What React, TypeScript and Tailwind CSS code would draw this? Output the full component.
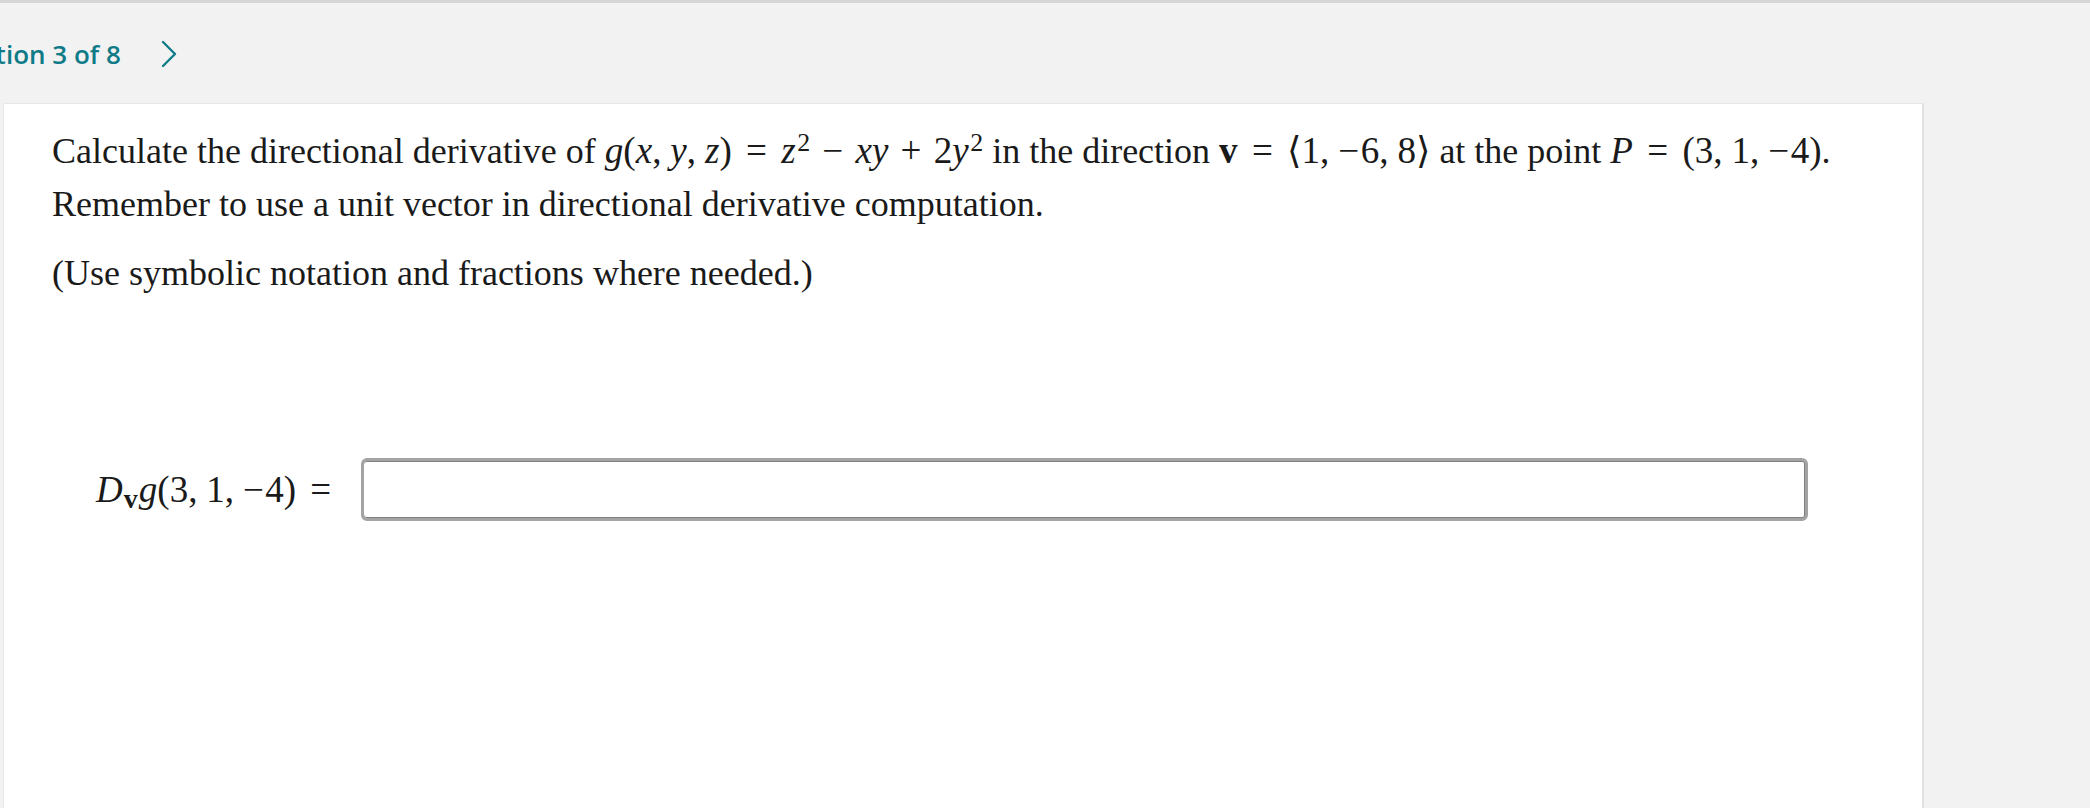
import type { ReactNode } from 'react';

// inline math helpers, MathJax-like spacing
const I = ({ children }: { children: ReactNode }) => <span className="italic">{children}</span>;

const Sup = ({ children }: { children: ReactNode }) => (
  <span className="relative -top-[0.48em] ml-[0.06em] text-[0.7em] leading-none">{children}</span>
);

const Rel = ({ children }: { children: ReactNode }) => (
  <span className="mx-[0.278em] inline-block w-[0.778em] text-center">{children}</span>
);

const Bin = ({ children }: { children: ReactNode }) => (
  <span className="mx-[0.222em] inline-block w-[0.778em] text-center">{children}</span>
);

const Neg = () => <span className="mr-[0.04em]">−</span>;

const C = () => <span className="mr-[0.24em]">,</span>;

function Header() {
  return (
    <div className="flex h-[100px] items-center overflow-hidden pt-[2px]">
      <span className="-ml-[69px] whitespace-nowrap font-['Open_Sans',sans-serif] text-[26px] font-semibold text-[#0f7b88]">
        Question 3 of 8
      </span>
      <svg width="16" height="28" viewBox="0 0 16 28" className="ml-[40px] text-[#0f7b88]" fill="none">
        <polyline points="2,2 14,14 2,26" stroke="currentColor" strokeWidth="2.4" strokeLinecap="round" strokeLinejoin="round" />
      </svg>
    </div>
  );
}

function Question() {
  return (
    <div className="font-['Liberation_Serif','DejaVu_Serif',serif] text-[36px] text-[#1a1a1a]">
      <p className="leading-[53px] whitespace-nowrap">
        Calculate the directional derivative of{' '}
        <span className="text-[1.03em]">
          <I>g</I>(<I>x</I>
          <C />
          <I>y</I>
          <C />
          <I>z</I>)<Rel>=</Rel>
          <I>z</I>
          <Sup>2</Sup>
          <Bin>−</Bin>
          <I>xy</I>
          <Bin>+</Bin>2<I>y</I>
          <Sup>2</Sup>
        </span>{' '}
        in the direction{' '}
        <span className="text-[1.03em]">
          <b>v</b>
          <Rel>=</Rel>⟨1
          <C />
          <Neg />6
          <C />
          8⟩
        </span>{' '}
        at the point{' '}
        <span className="text-[1.03em]">
          <I>P</I>
          <Rel>=</Rel>(3
          <C />1
          <C />
          <Neg />4)
        </span>
        .
      </p>
      <p className="leading-[53px]">Remember to use a unit vector in directional derivative computation.</p>
      <p className="mt-[16px] leading-[53px]">(Use symbolic notation and fractions where needed.)</p>
    </div>
  );
}

function AnswerRow() {
  return (
    <div className="mt-[158px] ml-[44px] flex items-center">
      <div className="w-[265px] whitespace-nowrap font-['Liberation_Serif','DejaVu_Serif',serif] text-[37px] leading-[63px] text-[#1a1a1a]">
        <I>D</I>
        <b className="relative top-[0.22em] ml-[0.04em] mr-[0.04em] text-[0.75em] leading-none">v</b>
        <I>g</I>(3
        <C />1
        <C />
        <Neg />4)<Rel>=</Rel>
      </div>
      <input
        type="text"
        aria-label="answer"
        className="h-[63px] w-[1447px] rounded-[6px] border-[3px] border-[#a3a3a3] bg-white px-3 text-[30px] shadow-[inset_0_1px_0_#7f7f7f,inset_0_-1px_0_#7f7f7f,inset_-1px_0_0_#7f7f7f] outline-none"
      />
    </div>
  );
}

export default function App() {
  return (
    <div className="flex h-[808px] flex-col overflow-hidden bg-[#f2f2f2]">
      <div className="h-[3px] bg-[#d6d6d6]" />
      <Header />
      <div className="ml-[3px] w-[1921px] flex-1 border-t border-l border-[#e6e6e6] border-r-2 border-r-[#e2e2e2] bg-white pt-[20px] pl-[48px]">
        <Question />
        <AnswerRow />
      </div>
    </div>
  );
}
